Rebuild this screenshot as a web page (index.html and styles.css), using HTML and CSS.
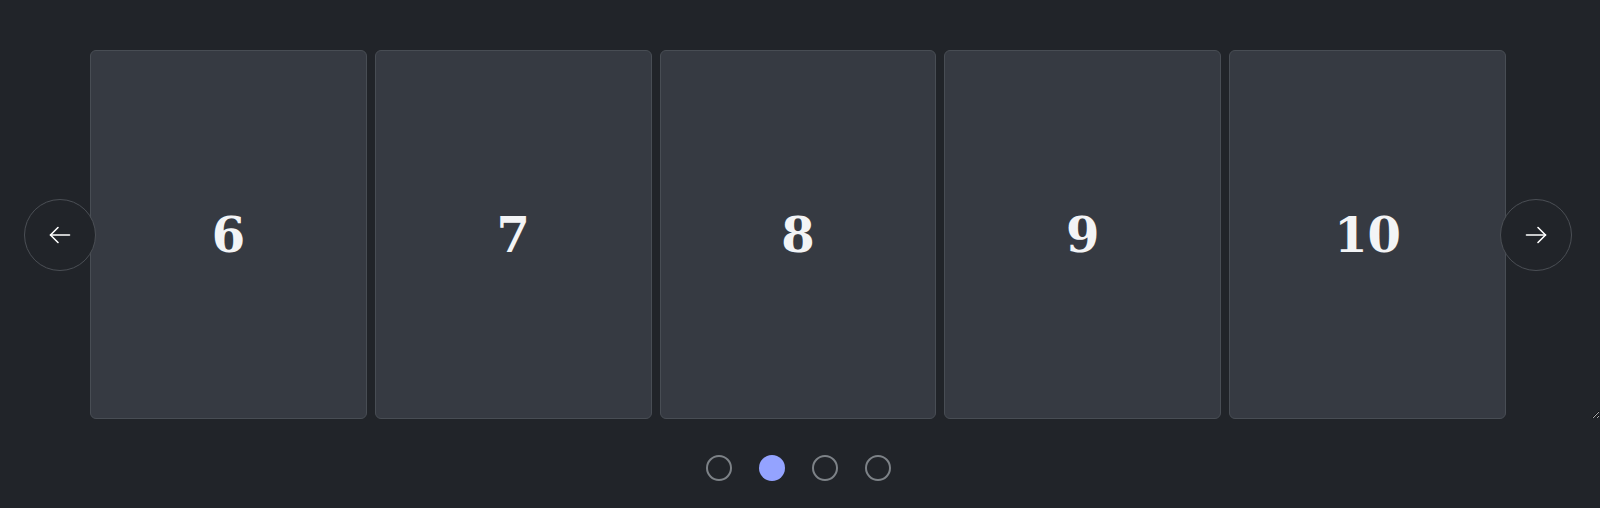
FILE: index.html
```html
<!DOCTYPE html>
<html lang="en">
  <head>
    <meta charset="UTF-8" />
    <title>Carousel</title>
    <link rel="stylesheet" href="styles.css">
  </head>
  <body>
    <div class="stage">
      <div class="carousel">
        <div class="track">
          <div class="slide"><div class="card">6</div></div>
          <div class="slide"><div class="card">7</div></div>
          <div class="slide"><div class="card">8</div></div>
          <div class="slide"><div class="card">9</div></div>
          <div class="slide"><div class="card">10</div></div>
        </div>
        <button class="nav prev" aria-label="Previous slide">
          <svg width="22" height="18" viewBox="0 0 22 18" fill="none" stroke="#fff" stroke-width="1.6" stroke-linecap="round" stroke-linejoin="round">
            <path d="M1.5 9H20.5" />
            <path d="M9 1.5L1.5 9L9 16.5" />
          </svg>
        </button>
        <button class="nav next" aria-label="Next slide">
          <svg width="22" height="18" viewBox="0 0 22 18" fill="none" stroke="#fff" stroke-width="1.6" stroke-linecap="round" stroke-linejoin="round">
            <path d="M1.5 9H20.5" />
            <path d="M13 1.5L20.5 9L13 16.5" />
          </svg>
        </button>
      </div>
    </div>
    <ul class="dots">
      <li></li>
      <li class="active"></li>
      <li></li>
      <li></li>
    </ul>
  </body>
</html>
```

FILE: styles.css
```css
* {
  margin: 0;
  padding: 0;
  list-style: none;
  box-sizing: border-box;
}
body {
  background-color: #212429;
  font-family: "DejaVu Serif", serif;
}

.stage {
  padding-top: 50px;
  overflow: hidden;
  resize: horizontal;
}

.carousel {
  position: relative;
  width: 1424px;
  margin-left: 86px;
}
.track {
  display: flex;
}
.slide {
  flex: 0 0 20%;
  padding: 0 4px;
}
.card {
  height: 369px;
  border: 1px solid #484d54;
  border-radius: 6px;
  background-color: #363a42;
  display: flex;
  align-items: center;
  justify-content: center;
  color: #f3f4f6;
  font-size: 48px;
  font-weight: bold;
}

.nav {
  width: 72px;
  height: 72px;
  border-radius: 50%;
  border: 1px solid #4b4f55;
  background-color: #212429;
  display: flex;
  align-items: center;
  justify-content: center;
  position: absolute;
  top: 50%;
  transform: translateY(-50%);
}
.nav.prev {
  left: -62px;
}
.nav.next {
  right: -62px;
}

.dots {
  width: 1424px;
  margin: 36px 0 0 86px;
  display: flex;
  justify-content: center;
  gap: 27px;
}
.dots li {
  width: 26px;
  height: 26px;
  border-radius: 50%;
  border: 2px solid #7d8287;
}
.dots li.active {
  border: none;
  background-color: #94a3ff;
}
```
